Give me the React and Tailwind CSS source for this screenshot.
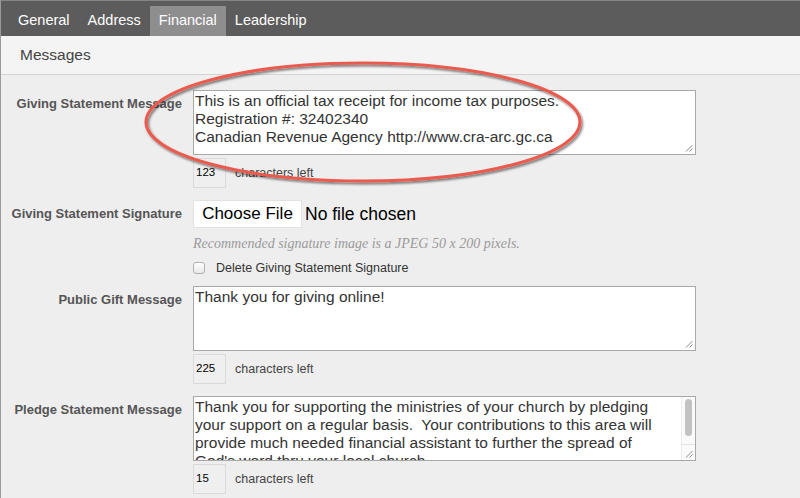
import React from "react";

const tabs = ["General", "Address", "Financial", "Leadership"];

const Grip = () => (
  <svg className="absolute right-[2px] bottom-[2px]" width="8" height="8" viewBox="0 0 8 8">
    <path d="M7.5 1 L1 7.5 M7.5 4.5 L4.5 7.5" stroke="#8a8a8a" strokeWidth="1" />
  </svg>
);

const Counter = ({ left }) => (
  <div className="mt-[3px] flex items-center">
    <div className="w-[33px] h-[30px] border border-[#dadada] bg-[#efefef] flex items-center pl-[2px] text-[11.5px] text-black">
      {left}
    </div>
    <span className="ml-[9px] text-[12.5px] text-[#444]">characters left</span>
  </div>
);

const Label = ({ children }) => (
  <div className="w-[181px] shrink-0 text-right pt-[6px] text-[13px] leading-[16px] font-bold text-[#555]">
    {children}
  </div>
);

const Box = ({ lines, scroll }) => (
  <div className="relative w-[503px] h-[65px] border border-[#a8a8a8] bg-white overflow-hidden">
    <div className="pl-[1px] pt-[1px] pr-[16px] text-[15.5px] leading-[18px] text-[#333] whitespace-pre">
      {lines.map((l, i) => (
        <div key={i}>{l}</div>
      ))}
    </div>
    {scroll && (
      <div className="absolute right-0 top-0 bottom-0 w-[14px] border-l border-[#ececec] bg-[#fafafa] flex flex-col">
        <div className="flex-1 flex justify-center pt-[2px]">
          <div className="w-[7px] h-[37px] rounded-full bg-[#c2c2c2]" />
        </div>
        <div className="h-[16px] border-t border-[#e4e4e4]" />
      </div>
    )}
    <Grip />
  </div>
);

export default function App() {
  return (
    <div className="relative w-[800px] h-[498px] overflow-hidden bg-[#eeeeee] border-l border-[#9a9a9a] font-['Liberation_Sans',Arial,sans-serif]">
      {/* tabs */}
      <nav className="h-[36px] bg-[#5c5c5c] border-t border-[#858585] flex items-end pl-[8px]">
        {tabs.map((t) => (
          <div
            key={t}
            className={
              "h-[30px] px-[9px] flex items-center text-[14.5px] text-white " +
              (t === "Financial" ? "bg-[#8e8e8e]" : "")
            }
          >
            {t}
          </div>
        ))}
      </nav>

      {/* section header */}
      <div className="h-[39px] bg-[#f4f4f4] border-b border-[#d3d3d3] flex items-center pl-[19px] text-[15.5px] text-[#444]">
        Messages
      </div>

      <div className="pt-[15px]">
        {/* giving statement message */}
        <div className="flex">
          <Label>Giving Statement Message</Label>
          <div className="ml-[11px]">
            <Box
              lines={[
                "This is an official tax receipt for income tax purposes.",
                "Registration #: 32402340",
                "Canadian Revenue Agency http://www.cra-arc.gc.ca",
              ]}
            />
            <Counter left="123" />
          </div>
        </div>

        {/* signature */}
        <div className="flex mt-[12px]">
          <Label>Giving Statement Signature</Label>
          <div className="ml-[11px]">
            <div className="flex items-center">
              <div className="h-[28px] w-[109px] bg-white border border-[#e2e2e2] flex items-center justify-center text-[17px] text-black">
                Choose File
              </div>
              <span className="ml-[3px] text-[17.5px] text-black">No file chosen</span>
            </div>
            <div className="mt-[8px] h-[16px] leading-[16px] italic text-[14px] text-[#9a9a9a] font-['Liberation_Serif',Georgia,serif]">
              Recommended signature image is a JPEG 50 x 200 pixels.
            </div>
            <div className="mt-[8px] h-[16px] flex items-center">
              <div className="w-[12px] h-[12px] rounded-[3px] border border-[#b0b0b0] bg-gradient-to-b from-white to-[#e8e8e8]" />
              <span className="ml-[11px] text-[12.5px] text-[#333]">Delete Giving Statement Signature</span>
            </div>
          </div>
        </div>

        {/* public gift */}
        <div className="flex mt-[10px]">
          <Label>Public Gift Message</Label>
          <div className="ml-[11px]">
            <Box lines={["Thank you for giving online!"]} />
            <Counter left="225" />
          </div>
        </div>

        {/* pledge */}
        <div className="flex mt-[12px]">
          <Label>Pledge Statement Message</Label>
          <div className="ml-[11px]">
            <Box
              scroll
              lines={[
                "Thank you for supporting the ministries of your church by pledging",
                "your support on a regular basis.  Your contributions to this area will",
                "provide much needed financial assistant to further the spread of",
                "God's word thru your local church.",
              ]}
            />
            <Counter left="15" />
          </div>
        </div>
      </div>

      {/* red annotation ring */}
      <svg className="absolute inset-0 pointer-events-none" width="800" height="498" viewBox="0 0 800 498">
        <defs>
          <filter id="sh" x="-10%" y="-20%" width="120%" height="140%">
            <feDropShadow dx="1.5" dy="2" stdDeviation="1.2" floodColor="#000" floodOpacity="0.5" />
          </filter>
        </defs>
        <ellipse cx="362" cy="122" rx="217" ry="59" fill="none" stroke="#ea5a4e" strokeWidth="3" filter="url(#sh)" />
      </svg>
    </div>
  );
}
